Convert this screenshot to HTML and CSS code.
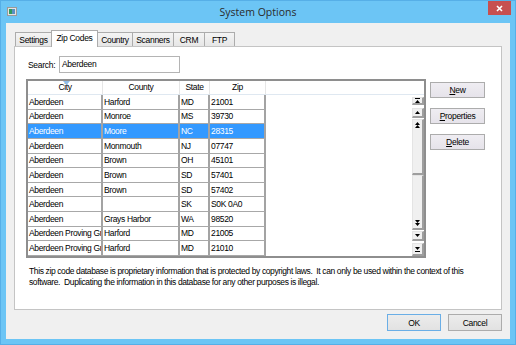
FILE: index.html
```html
<!DOCTYPE html>
<html>
<head>
<meta charset="utf-8">
<link rel="stylesheet" href="styles.css">
</head>
<body>
<div class="window">
  <div class="titlebar">
    <div class="tb-left">
      <svg class="app-icon" width="10" height="9" viewBox="0 0 10 9">
        <rect x="0.5" y="0.5" width="9" height="8" fill="#e4e4e4" stroke="#9a9a9a"/>
        <rect x="2" y="2" width="3" height="5" fill="#2f9a5c"/>
        <rect x="5" y="2" width="3" height="5" fill="#5a8fc4"/>
      </svg>
    </div>
    <div class="title">System Options</div>
    <div class="tb-right">
      <div class="close">
        <svg width="7" height="7" viewBox="0 0 7 7"><path d="M1 1L6 6M6 1L1 6" stroke="#fff" stroke-width="1.6"/></svg>
      </div>
    </div>
  </div>
  <div class="client">
    <div class="tabs">
      <div class="tab w-settings">Settings</div>
      <div class="tab active w-zip">Zip Codes</div>
      <div class="tab w-country">Country</div>
      <div class="tab w-scanners">Scanners</div>
      <div class="tab w-crm">CRM</div>
      <div class="tab w-ftp">FTP</div>
    </div>
    <div class="panel">
      <div class="search-row">
        <span class="search-label">Search:</span>
        <div class="search-box">Aberdeen</div>
      </div>
      <div class="main-row">
        <div class="grid">
          <div class="ghead">
            <div class="hc c1">City<svg class="sort" width="7" height="4" viewBox="0 0 7 4"><path d="M0 0H7L3.5 4Z" fill="#8fbde8"/></svg></div>
            <div class="hc c2">County</div>
            <div class="hc c3">State</div>
            <div class="hc c4">Zip</div>
          </div>
          <div class="gbody">
            <div class="rows">
              <div class="row"><div class="cell c1">Aberdeen</div><div class="cell c2">Harford</div><div class="cell c3">MD</div><div class="cell c4">21001</div></div>
              <div class="row"><div class="cell c1">Aberdeen</div><div class="cell c2">Monroe</div><div class="cell c3">MS</div><div class="cell c4">39730</div></div>
              <div class="row selected"><div class="cell c1">Aberdeen</div><div class="cell c2">Moore</div><div class="cell c3">NC</div><div class="cell c4">28315</div></div>
              <div class="row"><div class="cell c1">Aberdeen</div><div class="cell c2">Monmouth</div><div class="cell c3">NJ</div><div class="cell c4">07747</div></div>
              <div class="row"><div class="cell c1">Aberdeen</div><div class="cell c2">Brown</div><div class="cell c3">OH</div><div class="cell c4">45101</div></div>
              <div class="row"><div class="cell c1">Aberdeen</div><div class="cell c2">Brown</div><div class="cell c3">SD</div><div class="cell c4">57401</div></div>
              <div class="row"><div class="cell c1">Aberdeen</div><div class="cell c2">Brown</div><div class="cell c3">SD</div><div class="cell c4">57402</div></div>
              <div class="row"><div class="cell c1">Aberdeen</div><div class="cell c2"></div><div class="cell c3">SK</div><div class="cell c4">S0K 0A0</div></div>
              <div class="row"><div class="cell c1">Aberdeen</div><div class="cell c2">Grays Harbor</div><div class="cell c3">WA</div><div class="cell c4">98520</div></div>
              <div class="row"><div class="cell c1">Aberdeen Proving Ground</div><div class="cell c2">Harford</div><div class="cell c3">MD</div><div class="cell c4">21005</div></div>
              <div class="row"><div class="cell c1">Aberdeen Proving Ground</div><div class="cell c2">Harford</div><div class="cell c3">MD</div><div class="cell c4">21010</div></div>
            </div>
            <div class="vscroll">
              <div class="sb sb-first"><svg width="5" height="5" viewBox="0 0 5 5"><rect x="0" y="0" width="5" height="1"/><path d="M0 5L2.5 2L5 5Z"/></svg></div>
              <div class="sb sb-prev"><svg width="5" height="3" viewBox="0 0 5 3"><path d="M0 3L2.5 0L5 3Z"/></svg></div>
              <div class="sb sb-pgup"><svg width="5" height="6" viewBox="0 0 5 6"><path d="M0 3L2.5 0L5 3Z M0 6L2.5 3L5 6Z"/></svg></div>
              <div class="sb sb-pgdn"><svg width="5" height="6" viewBox="0 0 5 6"><path d="M0 0L2.5 3L5 0Z M0 3L2.5 6L5 3Z"/></svg></div>
              <div class="sb sb-next"><svg width="5" height="3" viewBox="0 0 5 3"><path d="M0 0L2.5 3L5 0Z"/></svg></div>
              <div class="sb sb-last"><svg width="5" height="5" viewBox="0 0 5 5"><path d="M0 0L2.5 3L5 0Z"/><rect x="0" y="4" width="5" height="1"/></svg></div>
            </div>
          </div>
        </div>
        <div class="side-buttons">
          <div class="btn side"><span><u>N</u>ew</span></div>
          <div class="btn side"><span><u>P</u>roperties</span></div>
          <div class="btn side"><span><u>D</u>elete</span></div>
        </div>
      </div>
      <p class="notice">This zip code database is proprietary information that is protected by copyright laws.  It can only be used within the context of this
software.  Duplicating the information in this database for any other purposes is illegal.</p>
    </div>
    <div class="bottom-row">
      <div class="btn bottom default">OK</div>
      <div class="btn bottom">Cancel</div>
    </div>
  </div>
</div>
</body>
</html>
```
FILE: styles.css
```css
* { box-sizing: border-box; }
html, body { margin: 0; padding: 0; }
body {
  width: 516px;
  height: 345px;
  overflow: hidden;
  font-family: "Liberation Sans", Arial, sans-serif;
  color: #000;
}
.window {
  width: 516px;
  height: 345px;
  background: #6cc5f5;
  border: 1px solid #56afe7;
  display: flex;
  flex-direction: column;
}
.titlebar {
  height: 22px;
  flex: none;
  display: grid;
  grid-template-columns: 1fr auto 1fr;
  align-items: start;
}
.app-icon { display: block; margin: 6px 0 0 6px; }
.title {
  font-family: "Open Sans", "Liberation Sans", sans-serif;
  font-size: 10.5px;
  line-height: 22px;
  color: #2b2b2b;
}
.tb-right { display: flex; justify-content: flex-end; }
.close {
  width: 23px;
  height: 14px;
  margin-right: 4px;
  background: #c75050;
  display: flex;
  align-items: center;
  justify-content: center;
}
.close svg { display: block; }
.client {
  flex: 1;
  margin: 0 5px 5px;
  background: #f0f0f0;
  padding: 7px 8px 8px;
  display: flex;
  flex-direction: column;
}
.tabs {
  height: 16px;
  flex: none;
  display: flex;
  align-items: flex-end;
  padding-left: 1px;
  position: relative;
  z-index: 1;
}
.tab {
  height: 14px;
  border-top: 1px solid #acacac;
  border-right: 1px solid #acacac;
  background: linear-gradient(#f4f4f4, #e6e6e6);
  font-size: 8.5px;
  letter-spacing: -0.3px;
  display: flex;
  align-items: center;
  justify-content: center;
}
.tab:first-child { border-left: 1px solid #acacac; }
.tab.active {
  height: 17px;
  margin-bottom: -1px;
  margin-left: -1px;
  border-left: 1px solid #acacac;
  background: #fff;
  padding-bottom: 3px;
}
.w-settings { width: 37px; }
.w-zip { width: 47px; }
.w-country { width: 35px; }
.w-scanners { width: 41px; }
.w-crm { width: 31px; }
.w-ftp { width: 30px; }
.panel {
  flex: 1;
  background: #fff;
  border: 1px solid #c4c4c4;
  padding: 9px 0 0 11px;
  display: flex;
  flex-direction: column;
}
.search-row {
  display: flex;
  align-items: center;
  height: 17px;
  font-size: 8.5px;
  letter-spacing: -0.3px;
}
.search-label { margin-left: 2px; width: 31px; }
.search-box {
  width: 121px;
  height: 17px;
  border: 1px solid #b4b4b4;
  padding-left: 2px;
  line-height: 14px;
}
.main-row {
  display: flex;
  align-items: flex-start;
  margin-top: 6px;
}
.grid {
  width: 400px;
  height: 179px;
  border: 2px solid #8e8e8e;
  background: #fff;
  display: flex;
  flex-direction: column;
  font-size: 8.5px;
  letter-spacing: -0.35px;
}
.ghead {
  height: 14px;
  flex: none;
  display: flex;
  border-bottom: 1px solid #dfe8f1;
}
.hc {
  position: relative;
  border-right: 1px solid #e6e6e6;
  text-align: center;
  line-height: 13px;
}
.sort { position: absolute; left: 35px; top: 0; display: block; }
.c1 { width: 75px; }
.c2 { width: 77px; }
.c3 { width: 30px; }
.c4 { width: 56px; }
.gbody { flex: 1; display: flex; }
.rows { flex: 1; }
.row {
  height: calc(161px / 11);
  display: flex;
}
.cell {
  border-right: 2px solid #a3a3a3;
  border-bottom: 1px solid #a8a8a8;
  padding-left: 1px;
  white-space: nowrap;
  overflow: hidden;
  text-overflow: clip;
  display: flex;
  align-items: center;
}
.row.selected .cell { background: #3399ff; color: #fff; }
.vscroll {
  width: 12px;
  display: flex;
  flex-direction: column;
}
.sb {
  background: #f0f0f0;
  border-top: 1px solid #e4e4e4;
  border-left: 1px solid #e4e4e4;
  border-right: 2px solid #9e9e9e;
  border-bottom: 2px solid #9e9e9e;
  display: flex;
  justify-content: center;
  align-items: center;
}
.sb svg { display: block; fill: #000; }
.sb-first { height: 8px; margin-top: 2px; }
.sb-prev { height: 10px; margin-top: 3px; }
.sb-pgup { height: 56px; margin-top: 1px; align-items: flex-start; padding-top: 2px; }
.sb-pgdn { height: 55px; align-items: flex-end; padding-bottom: 2px; }
.sb-next { height: 10px; margin-top: 1px; }
.sb-last { height: 13px; margin-top: 2px; }
.side-buttons {
  margin-left: 4px;
  margin-top: 3px;
  display: flex;
  flex-direction: column;
  gap: 10px;
}
.btn {
  display: flex;
  align-items: center;
  justify-content: center;
  border: 1px solid #acacac;
  font-size: 8.5px;
  letter-spacing: -0.3px;
}
.btn.side {
  width: 55px;
  height: 16px;
  background: linear-gradient(#efedf2, #e6e3ea);
}
.notice {
  margin: 8px 0 0 3px;
  font-size: 8.5px;
  letter-spacing: -0.38px;
  line-height: 11px;
  white-space: pre;
}
.bottom-row {
  flex: none;
  height: 17px;
  margin-top: 4px;
  display: flex;
  justify-content: flex-end;
  gap: 7px;
}
.btn.bottom {
  width: 54px;
  height: 17px;
  background: linear-gradient(#ececec, #e2e2e2);
}
.btn.default { border-color: #6aaee6; }
```
